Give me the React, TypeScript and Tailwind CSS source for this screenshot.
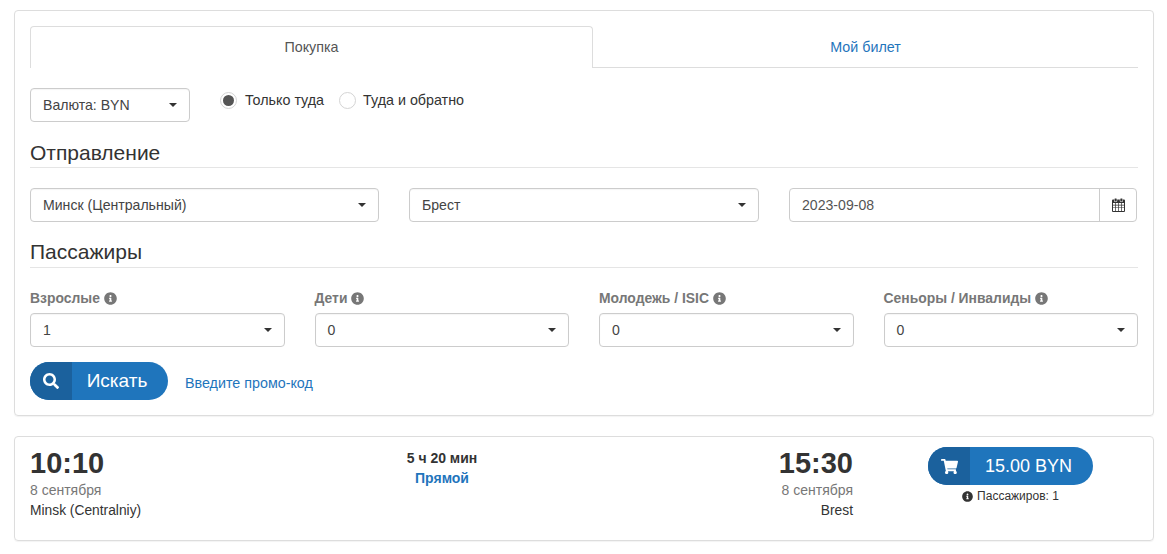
import { ReactNode } from 'react';
import { FaInfoCircle, FaSearch, FaShoppingCart } from 'react-icons/fa';

const SelectBox = ({ value, className = '' }: { value: string; className?: string }) => (
    <div className={`flex h-[34px] items-center justify-between rounded-[4px] border border-[#ccc] bg-white pl-3 pr-[12px] text-[14.1px] text-[#444] shadow-[inset_0_1px_1px_rgba(0,0,0,0.04)] ${className}`}>
        <span className="pt-[2px]">{value}</span>
        <span className="h-0 w-0 border-x-[4px] border-t-[4px] border-x-transparent border-t-[#333]" />
    </div>
);

const Heading = ({ children, className = '' }: { children: ReactNode; className?: string }) => (
    <h4 className={`border-b border-[#e5e5e5] text-[21px] leading-[24px] text-[#333] ${className}`}>{children}</h4>
);

const PassengerField = ({ label, value }: { label: string; value: string }) => (
    <div className="min-w-0 flex-1">
        <div className="flex h-[24px] items-center gap-[4px] text-[13.9px] font-bold text-[#777]">
            {label}
            <FaInfoCircle className="h-[13px] w-[13px]" />
        </div>
        <SelectBox value={value} className="mt-[3px]" />
    </div>
);

const PillButton = ({ icon, label, className, labelClass }: { icon: ReactNode; label: string; className: string; labelClass: string }) => (
    <button className={`flex h-[38px] overflow-hidden rounded-full bg-[#1f75bc] text-white ${className}`}>
        <span className="flex h-full w-[42px] items-center justify-center bg-[#1b619d]">{icon}</span>
        <span className={`flex h-full flex-1 items-center justify-center pr-[6px] ${labelClass}`}>{label}</span>
    </button>
);

const CalendarIcon = () => (
    <svg viewBox="0 0 13 14" className="h-[14px] w-[13px]" fill="#333">
        <path d="M3 0.5h1.2a.5.5 0 0 1 .5.5v2a.5.5 0 0 1-.5.5H3a.5.5 0 0 1-.5-.5V1a.5.5 0 0 1 .5-.5zm5.8 0H10a.5.5 0 0 1 .5.5v2a.5.5 0 0 1-.5.5H8.800a.5.5 0 0 1-.5-.5V1a.5.5 0 0 1 .5-.5z" />
        <path
            fillRule="evenodd"
            d="M1 1.500h1V3a1 1 0 0 0 1 1h1.200a1 1 0 0 0 1-1V1.500h2.600V3a1 1 0 0 0 1 1H10a1 1 0 0 0 1-1V1.500h1a1 1 0 0 1 1 1V13a1 1 0 0 1-1 1H1a1 1 0 0 1-1-1V2.500a1 1 0 0 1 1-1zM1 5v1.700h2V5H1zm2.700 0v1.700h2.400V5H3.700zm3.100 0v1.700h2.400V5H6.800zm3.100 0v1.700H12V5H9.900zM1 7.400v2h2v-2H1zm2.700 0v2h2.400v-2H3.700zm3.100 0v2h2.400v-2H6.800zm3.100 0v2H12v-2H9.900zM1 10.100V13h2v-2.900H1zm2.700 0V13h2.400v-2.900H3.700zm3.100 0V13h2.400v-2.900H6.800zm3.100 0V13H12v-2.900H9.900z"
        />
    </svg>
);

const App = () => {
    return (
        <div className="h-[554px] overflow-hidden bg-white pl-[14px] pr-[13px] pt-[10px] font-['Liberation_Sans',Arial,sans-serif] text-[14px] text-[#333]">
            <div className="h-[406px] rounded-[4px] border border-[#ddd] px-[15px] pt-[15px] shadow-[0_1px_1px_rgba(0,0,0,0.05)]">
                <div className="flex h-[42px] text-[14.3px]">
                    <div className="flex w-[563px] items-center justify-center rounded-t-[4px] border border-b-0 border-[#ddd] text-[#555]">Покупка</div>
                    <div className="flex flex-1 items-center justify-center border-b border-[#ddd] pt-[2px] text-[#1f75bc]">Мой билет</div>
                </div>

                <div className="mt-[20px] flex h-[34px]">
                    <SelectBox value="Валюта: BYN" className="w-[160px]" />
                    <div className="ml-[30px] flex h-[24px] items-center text-[14.3px] text-[#333]">
                        <span className="flex h-[17px] w-[17px] items-center justify-center rounded-full border border-[#d4d4d4]">
                            <span className="h-[11px] w-[11px] rounded-full bg-[#555]" />
                        </span>
                        <span className="ml-[8px] pt-[2px]">Только туда</span>
                        <span className="ml-[15px] h-[17px] w-[17px] rounded-full border border-[#d4d4d4]" />
                        <span className="ml-[7px] pt-[2px]">Туда и обратно</span>
                    </div>
                </div>

                <Heading className="mt-[19px] h-[27px]">Отправление</Heading>

                <div className="mt-[20px] flex gap-[30px]">
                    <SelectBox value="Минск (Центральный)" className="w-[349px]" />
                    <SelectBox value="Брест" className="w-[350px]" />
                    <div className="flex h-[34px] w-[348px] rounded-[4px] border border-[#ccc]">
                        <div className="flex flex-1 items-center pl-3 pt-[2px] text-[14.1px] text-[#555]">2023-09-08</div>
                        <div className="flex w-[37px] items-center justify-center border-l border-[#ccc]">
                            <CalendarIcon />
                        </div>
                    </div>
                </div>

                <Heading className="mt-[18px] h-[28px]">Пассажиры</Heading>

                <div className="mt-[18px] flex gap-[30px]">
                    <PassengerField label="Взрослые" value="1" />
                    <PassengerField label="Дети" value="0" />
                    <PassengerField label="Молодежь / ISIC" value="0" />
                    <PassengerField label="Сеньоры / Инвалиды" value="0" />
                </div>

                <div className="mt-[15px] flex items-center">
                    <PillButton icon={<FaSearch className="h-[16px] w-[16px]" />} label="Искать" className="w-[138px]" labelClass="text-[19px]" />
                    <a href="#" className="ml-[17px] mt-[5px] text-[14.3px] text-[#1f75bc]">Введите промо-код</a>
                </div>
            </div>

            <div className="mt-[20px] flex h-[105px] rounded-[4px] border border-[#ddd] px-[15px] pt-[10px] shadow-[0_1px_1px_rgba(0,0,0,0.05)]">
                <div className="w-[300px]">
                    <div className="text-[29px] font-bold leading-[33px]">10:10</div>
                    <div className="text-[14px] leading-[20px] text-[#777]">8 сентября</div>
                    <div className="mt-[1px] text-[13.8px] leading-[20px]">Minsk (Centralniy)</div>
                </div>
                <div className="w-[224px] pt-[1px] text-center text-[14px] font-bold leading-[20px]">
                    <div>5 ч 20 мин</div>
                    <div className="text-[#1f75bc]">Прямой</div>
                </div>
                <div className="w-[299px] text-right">
                    <div className="text-[29px] font-bold leading-[33px]">15:30</div>
                    <div className="text-[14px] leading-[20px] text-[#777]">8 сентября</div>
                    <div className="mt-[1px] text-[13.8px] leading-[20px]">Brest</div>
                </div>
                <div className="ml-[75px] w-[165px]">
                    <PillButton icon={<FaShoppingCart className="h-[17px] w-[17px]" />} label="15.00 BYN" className="w-[165px]" labelClass="text-[18px]" />
                    <div className="mt-[3px] flex items-center justify-center gap-[4px] text-[12px] leading-[17px]">
                        <FaInfoCircle className="h-[11px] w-[11px]" />
                        Пассажиров: 1
                    </div>
                </div>
            </div>
        </div>
    );
};

export default App;
